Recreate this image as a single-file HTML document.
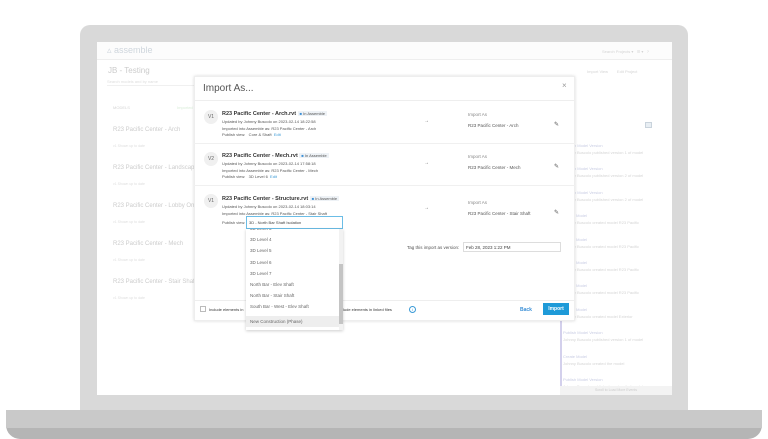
<!DOCTYPE html>
<html><head><style>
*{margin:0;padding:0;box-sizing:border-box}
body{width:768px;height:439px;background:#fff;position:relative;overflow:hidden;font-family:"Liberation Sans",sans-serif}
.a{position:absolute;white-space:nowrap}
.f{color:#d4d4d4}
.t{font-size:5px;color:#555}
.b{font-size:5.5px;font-weight:bold;color:#333}
</style></head><body>
<div class="a" style="left:80px;top:25px;width:608px;height:390px;background:#d9d9d9;border-radius:10px 10px 0 0"></div>
<div class="a" style="left:97px;top:42px;width:575px;height:353px;background:#fff;overflow:hidden">
 <div class="a" style="left:0;top:0;width:575px;height:18px;border-bottom:1px solid #eee;background:#fcfcfc"></div>
 <div class="a" style="left:10px;top:3px;font-size:9px;color:#cfd6dd">▵ assemble</div>
 <div class="a f" style="left:505px;top:7px;font-size:4px">Search Projects ▾ &nbsp; ☰ ▾ &nbsp; ?</div>
 <div class="a" style="left:11px;top:24px;font-size:8px;color:#ccc">JB - Testing</div>
 <div class="a f" style="left:490px;top:27px;font-size:4px">Import View &nbsp;&nbsp;&nbsp;&nbsp;&nbsp;&nbsp; Edit Project</div>
 <div class="a" style="left:10px;top:34px;width:90px;height:10px;border-bottom:1px solid #f0f0f0;font-size:4px;color:#ddd;padding-top:3px">Search models and by name</div>
 <div class="a f" style="left:16px;top:63px;font-size:4px">MODELS</div>
 <div class="a" style="left:80px;top:63px;font-size:4px;color:#d8ecd8">Imported</div>
 <div class="a" style="left:16px;top:69px;font-size:6px;color:#ccc;line-height:38px">R23 Pacific Center - Arch<br>R23 Pacific Center - Landscape<br>R23 Pacific Center - Lobby Only<br>R23 Pacific Center - Mech<br>R23 Pacific Center - Stair Shaft</div>
 <div class="a" style="left:16px;top:85px;font-size:3.5px;color:#ddd;line-height:38px">v1 Shown up to date<br>v1 Shown up to date<br>v1 Shown up to date<br>v1 Shown up to date<br>v1 Shown up to date</div>
 <div class="a" style="left:463px;top:58px;width:112px;height:295px;border-left:1px solid #f0f0f0"></div>
 <div class="a f" style="left:470px;top:65px;font-size:4px">Log</div>
 <div class="a" style="left:548px;top:80px;width:7px;height:6px;border:1px solid #c9d3dc;background:#e8eef3"></div>
 <div class="a" style="left:466px;top:92px;font-size:4px;color:#c8cce3;line-height:23.4px">Publish Model Version<br>Publish Model Version<br>Publish Model Version<br>Create Model<br>Create Model<br>Create Model<br>Create Model<br>Create Model<br>Publish Model Version<br>Create Model<br>Publish Model Version</div>
 <div class="a" style="left:466px;top:99px;font-size:4px;color:#d4d4d4;line-height:23.4px">Johnny Buscolo published version 1 of model<br>Johnny Buscolo published version 2 of model<br>Johnny Buscolo published version 2 of model<br>Johnny Buscolo created model R23 Pacific<br>Johnny Buscolo created model R23 Pacific<br>Johnny Buscolo created model R23 Pacific<br>Johnny Buscolo created model R23 Pacific<br>Johnny Buscolo created model Exterior<br>Johnny Buscolo published version 1 of model<br>Johnny Buscolo created the model<br>Johnny Buscolo published version 4 of model</div>
 <div class="a" style="left:463px;top:274px;width:2px;height:70px;background:#d3d0ec"></div>
 <div class="a" style="left:463px;top:344px;width:112px;height:9px;background:#f3f3f3;font-size:3.5px;color:#ccc;text-align:center;padding-top:2px">Scroll to Load More Events</div>
 <div class="a" style="left:97px;top:34px;width:381px;height:245px;background:#fff;box-shadow:0 0 3px rgba(0,0,0,.15);border:1px solid #eee"></div>
 <div class="a" style="left:106px;top:41px;font-size:10px;color:#555">Import As...</div>
 <div class="a" style="left:465px;top:39px;font-size:8px;color:#999">×</div>
 <div class="a" style="left:97px;top:58px;width:381px;height:1px;background:#eee"></div>
 <div class="a" style="left:97px;top:101px;width:381px;height:1px;background:#f0f0f0"></div>
 <div class="a" style="left:97px;top:143px;width:381px;height:1px;background:#f0f0f0"></div>
 <div class="a" style="left:97px;top:258px;width:381px;height:1px;background:#eee"></div>
</div>
<div class="a" style="left:204px;top:110px;width:14px;height:14px;border-radius:50%;background:#f0f0f0;font-size:5px;color:#666;text-align:center;line-height:14px">V1</div>
<div class="a b" style="left:222px;top:111px">R23 Pacific Center - Arch.rvt <span style="background:#eef2f6;color:#555;font-weight:normal;font-size:4px;padding:0 2px"><span style="color:#3a8fd6">■</span> In Assemble</span></div>
<div class="a t" style="left:222px;top:119px;line-height:6.5px;font-size:4px">Updated by Johnny Buscolo on 2023-02-14 18:22:58<br>Imported into Assemble as: R23 Pacific Center - Arch<br>Publish view: &nbsp; Core &amp; Shaft &nbsp;<span style="color:#3a9ad6">Edit</span></div>
<div class="a t" style="left:424px;top:118px">→</div>
<div class="a t" style="left:468px;top:112px;color:#888;font-size:4.5px">Import As</div>
<div class="a t" style="left:468px;top:123px;font-size:4.5px">R23 Pacific Center - Arch</div>
<div class="a t" style="left:554px;top:121px;font-size:6px">✎</div>

<div class="a" style="left:204px;top:152px;width:14px;height:14px;border-radius:50%;background:#f0f0f0;font-size:5px;color:#666;text-align:center;line-height:14px">V2</div>
<div class="a b" style="left:222px;top:153px">R23 Pacific Center - Mech.rvt <span style="background:#eef2f6;color:#555;font-weight:normal;font-size:4px;padding:0 2px"><span style="color:#3a8fd6">■</span> In Assemble</span></div>
<div class="a t" style="left:222px;top:161px;line-height:6.5px;font-size:4px">Updated by Johnny Buscolo on 2023-02-14 17:58:18<br>Imported into Assemble as: R23 Pacific Center - Mech<br>Publish view: &nbsp; 3D Level 6 &nbsp;<span style="color:#3a9ad6">Edit</span></div>
<div class="a t" style="left:424px;top:160px">→</div>
<div class="a t" style="left:468px;top:154px;color:#888;font-size:4.5px">Import As</div>
<div class="a t" style="left:468px;top:165px;font-size:4.5px">R23 Pacific Center - Mech</div>
<div class="a t" style="left:554px;top:163px;font-size:6px">✎</div>

<div class="a" style="left:204px;top:194px;width:14px;height:14px;border-radius:50%;background:#f0f0f0;font-size:5px;color:#666;text-align:center;line-height:14px">V1</div>
<div class="a b" style="left:222px;top:196px">R23 Pacific Center - Structure.rvt <span style="background:#eef2f6;color:#555;font-weight:normal;font-size:4px;padding:0 2px"><span style="color:#3a8fd6">■</span> In Assemble</span></div>
<div class="a t" style="left:222px;top:204px;line-height:6.5px;font-size:4px">Updated by Johnny Buscolo on 2023-02-14 18:03:14<br>Imported into Assemble as: R23 Pacific Center - Stair Shaft</div>
<div class="a t" style="left:222px;top:220px;font-size:4px">Publish view:</div>
<div class="a" style="left:246px;top:216px;width:97px;height:13px;border:1px solid #6bbde6;background:#fff;font-size:4px;color:#444;padding:3px 2px">3D - North Bar Shaft Isolation</div>
<div class="a t" style="left:424px;top:205px">→</div>
<div class="a t" style="left:468px;top:200px;color:#888;font-size:4.5px">Import As</div>
<div class="a t" style="left:468px;top:211px;font-size:4.5px">R23 Pacific Center - Stair Shaft</div>
<div class="a t" style="left:554px;top:209px;font-size:6px">✎</div>

<div class="a t" style="left:407px;top:245px;font-size:4.5px">Tag this import as version:</div>
<div class="a" style="left:463px;top:242px;width:98px;height:10px;border:1px solid #ddd;font-size:4.5px;color:#444;padding:2px">Feb 28, 2023 1:22 PM</div>

<div class="a" style="left:200px;top:306px;width:6px;height:6px;border:1px solid #bbb"></div>
<div class="a t" style="left:209px;top:307px;font-size:4px;color:#333">Include elements in</div>
<div class="a t" style="left:343px;top:307px;font-size:4px;color:#333">lude elements in linked files</div>
<div class="a" style="left:409px;top:306px;width:7px;height:7px;border:1px solid #3a9ad6;border-radius:50%;font-size:4px;color:#3a9ad6;text-align:center;line-height:5px">i</div>
<div class="a" style="left:520px;top:307px;font-size:5px;font-weight:bold;color:#3a8fd6">Back</div>
<div class="a" style="left:543px;top:303px;width:26px;height:12px;background:#1e9ad8;color:#fff;font-size:5px;font-weight:bold;text-align:center;line-height:12px">Import</div>

<div class="a" style="left:246px;top:229px;width:97px;height:101px;background:#fff;box-shadow:0 1px 3px rgba(0,0,0,.2);overflow:hidden">
 <div class="a" style="left:0;top:-6px;width:93px;font-size:4.5px;color:#666;line-height:11.2px;padding-left:4px">3D Level 3<br>3D Level 4<br>3D Level 5<br>3D Level 6<br>3D Level 7<br>North Bar - Elev Shaft<br>North Bar - Stair Shaft<br>South Bar - West - Elev Shaft</div>
 <div class="a" style="left:0;top:87px;width:93px;height:11px;background:#eee;font-size:4.5px;color:#666;line-height:11px;padding-left:4px">New Construction (Phase)</div>
 <div class="a" style="left:93px;top:0;width:4px;height:101px;background:#f2f2f2"></div>
 <div class="a" style="left:93px;top:35px;width:4px;height:60px;background:#c4c4c4"></div>
</div>
<div class="a" style="left:6px;top:410px;width:756px;height:29px;background:#b5b5b5;border-radius:0 0 14px 14px"></div>
<div class="a" style="left:6px;top:410px;width:756px;height:18px;background:#c9c9c9"></div>
</body></html>
